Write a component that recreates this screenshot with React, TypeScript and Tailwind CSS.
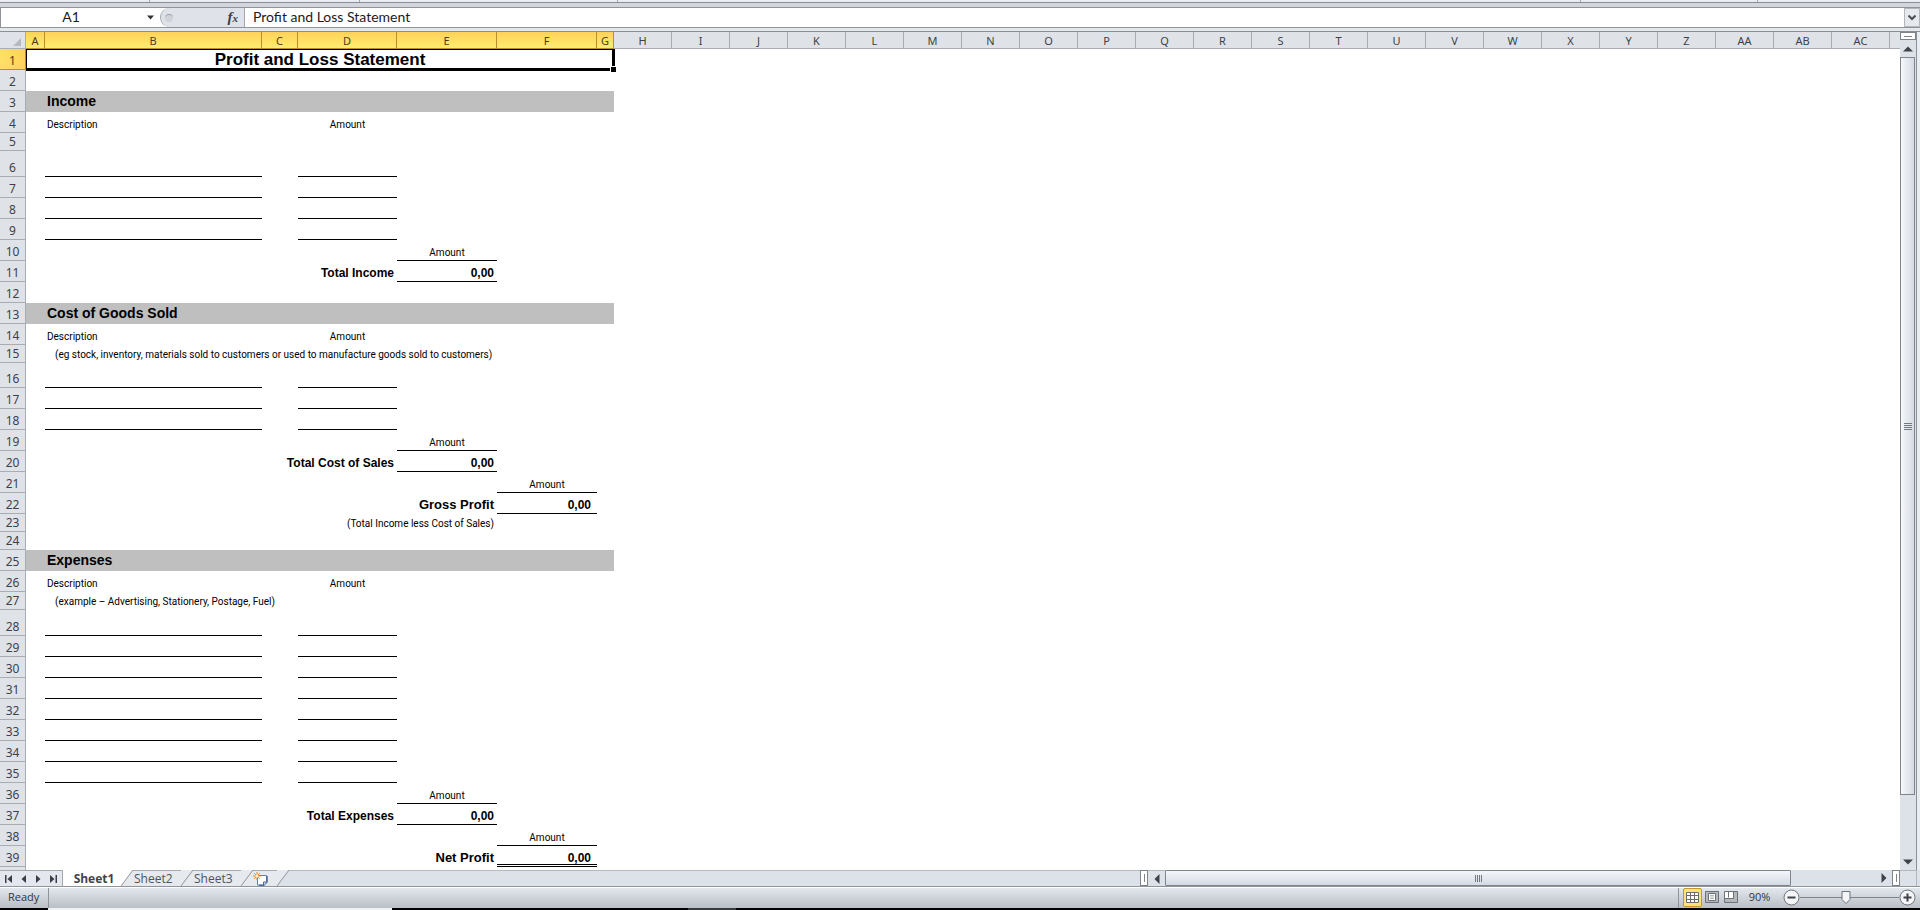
import type { ReactNode } from 'react';

type Cell = { span?: number; text?: ReactNode; className?: string };
type Row = { h: string; cells?: Cell[] };

const SMALL = "font-['Roboto',sans-serif] text-[10px] leading-4";
const AMOUNT = "font-['Roboto',sans-serif] text-[10px] leading-[14px]";
const BOLD = "font-['Liberation_Sans',sans-serif] font-bold";
const LINE = 'border-b border-black';

const letters = ['A', 'B', 'C', 'D', 'E', 'F', 'G'];
const others = ['H', 'I', 'J', 'K', 'L', 'M', 'N', 'O', 'P', 'Q', 'R', 'S', 'T', 'U', 'V', 'W', 'X', 'Y', 'Z', 'AA', 'AB', 'AC'];

const entry = (h = 'h-[21px]'): Row => ({
  h,
  cells: [{}, { className: LINE }, {}, { className: LINE }, { span: 3 }],
});
const section = (text: string): Row => ({
  h: 'h-[21px]',
  cells: [
    { className: 'bg-[#bfbfbf]' },
    { span: 6, text, className: "bg-[#bfbfbf] pb-px pl-[2px] font-['Liberation_Sans',sans-serif] text-[14px] leading-5 font-bold" },
  ],
});
const labels: Row = {
  h: 'h-[21px]',
  cells: [
    {},
    { text: 'Description', className: `pl-[2px] ${SMALL}` },
    {},
    { text: 'Amount', className: `text-center ${SMALL}` },
    { span: 3 },
  ],
};
const note = (text: string): Row => ({
  h: 'h-[18px]',
  cells: [{}, { span: 5, text, className: `pl-[10px] ${SMALL}` }, {}],
});
const amountE: Row = {
  h: 'h-[21px]',
  cells: [{ span: 4 }, { text: 'Amount', className: `text-center ${AMOUNT} ${LINE}` }, { span: 2 }],
};
const amountF: Row = {
  h: 'h-[21px]',
  cells: [{ span: 5 }, { text: 'Amount', className: `text-center ${AMOUNT} ${LINE}` }, {}],
};
const totalE = (text: string): Row => ({
  h: 'h-[21px]',
  cells: [
    {},
    { span: 3, text, className: `pb-px pr-[3px] text-right text-[12px] leading-4 ${BOLD}` },
    { text: '0,00', className: `pr-[3px] text-right text-[12px] leading-4 ${BOLD} ${LINE}` },
    { span: 2 },
  ],
});
const totalF = (text: string, border: string): Row => ({
  h: 'h-[21px]',
  cells: [
    {},
    { span: 4, text, className: `pb-px pr-[3px] text-right text-[13px] leading-4 ${BOLD}` },
    { text: '0,00', className: `pr-[6px] text-right text-[12px] ${BOLD} ${border}` },
    {},
  ],
});
const blank = (h = 'h-[21px]'): Row => ({ h, cells: [{ span: 7 }] });

const rows: Row[] = [
  {
    h: 'h-[21px]',
    cells: [
      {
        span: 7,
        className: "relative text-center font-['Liberation_Sans',sans-serif] text-[17px] leading-5 font-bold",
        text: (
          <>
            Profit and Loss Statement
            <span className="absolute top-0 right-[-1px] bottom-[-1px] left-0 border-t border-r-3 border-b-3 border-l border-black" />
            <span className="absolute right-[-3px] bottom-[-3px] h-[7px] w-[7px] border border-white bg-black" />
          </>
        ),
      },
    ],
  },
  blank(),
  section('Income'),
  labels,
  blank('h-[18px]'),
  entry('h-[26px]'),
  entry(),
  entry(),
  entry(),
  amountE,
  totalE('Total Income'),
  blank(),
  section('Cost of Goods Sold'),
  labels,
  note('(eg stock, inventory, materials sold to customers or used to manufacture goods sold to customers)'),
  entry('h-[25px]'),
  entry(),
  entry(),
  amountE,
  totalE('Total Cost of Sales'),
  amountF,
  totalF('Gross Profit', `leading-4 ${LINE}`),
  {
    h: 'h-[18px]',
    cells: [
      {},
      { span: 4, text: '(Total Income less Cost of Sales)', className: `pr-[3px] text-right ${SMALL}` },
      { span: 2 },
    ],
  },
  blank('h-[18px]'),
  section('Expenses'),
  labels,
  note('(example – Advertising, Stationery, Postage, Fuel)'),
  entry('h-[26px]'),
  entry(),
  entry(),
  entry(),
  entry(),
  entry(),
  entry(),
  entry(),
  amountE,
  totalE('Total Expenses'),
  amountF,
  totalF('Net Profit', 'leading-3 border-b-3 border-double border-black'),
];

function FormulaBar() {
  return (
    <>
      <div className="flex h-[3px] border-b border-[#8b9097] bg-[#e9ecf1]">
        <div className="w-[150px] border-r border-[#a4a9b0]" />
        <div className="w-[210px] border-r border-[#a4a9b0]" />
        <div className="w-[258px] border-r border-[#a4a9b0]" />
        <div className="flex-1" />
        <div className="w-[178px] border-x border-[#a4a9b0]" />
        <div className="w-[162px]" />
      </div>
      <div className="h-1 bg-[#d3d7dd]" />
      <div className="flex h-[21px] border-y border-[#8f949b] bg-white font-['Lato',sans-serif] text-[14px] text-[#1b1b1b]">
        <div className="flex w-[160px] items-center border-l border-[#8f949b]">
          <input aria-label="Name box" defaultValue="A1" className="h-full w-[142px] bg-transparent pr-0.5 pb-0.5 text-center outline-none" />
          <button aria-label="Name list" className="flex h-full flex-1 items-center">
            <svg width="8" height="5" viewBox="0 0 8 5" className="ml-1"><path d="M0 0.5h7L3.5 4.5z" fill="#333" /></svg>
          </button>
        </div>
        <div className="flex w-[85px] items-center justify-between rounded-l-full border-r border-l border-[#a4a9b0] bg-[#dfe2e8] pr-1.5 pl-1">
          <span className="h-2 w-2 rounded-full border-t border-[#9a9fa6] bg-[#cfd2d7]" />
          <button aria-label="Insert function" className="font-['Liberation_Serif',serif] text-[15px] leading-4 font-bold text-[#3c3f45] italic">
            f<span className="text-[11px]">x</span>
          </button>
        </div>
        <input aria-label="Formula" defaultValue="Profit and Loss Statement" className="min-w-0 flex-1 pb-0.5 pl-2 outline-none" />
        <button aria-label="Expand formula bar" className="flex w-4 items-center justify-center border border-[#b4b8be] bg-[#e6e9ed]">
          <svg width="8" height="6" viewBox="0 0 8 6"><path d="M0.5 0.5L4 4L7.5 0.5" fill="none" stroke="#4a4e55" strokeWidth="2" /></svg>
        </button>
      </div>
      <div className="h-1 border-b border-[#8b9097] bg-[#e4e7ec]" />
    </>
  );
}

function Sheet() {
  return (
    <table className="w-full table-fixed border-separate border-spacing-0 whitespace-nowrap text-black">
      <colgroup>
        <col className="w-[26px]" />
        <col className="w-[19px]" />
        <col className="w-[217px]" />
        <col className="w-[36px]" />
        <col className="w-[99px]" />
        <col className="w-[100px]" />
        <col className="w-[100px]" />
        <col className="w-[17px]" />
        {others.map((c) => <col key={c} className="w-[58px]" />)}
        <col />
      </colgroup>
      <thead className="font-['Noto_Sans',sans-serif] text-[11px] leading-[14px]">
        <tr className="h-[17px]">
          <th aria-label="Select all" className="border-r border-b border-[#a9adb3] bg-[#dfe3e9] p-0">
            <svg width="8" height="8" viewBox="0 0 8 8" className="mt-1 mr-1 ml-auto"><path d="M8 0v8H0z" fill="#b6bac0" /></svg>
          </th>
          {letters.map((c) => (
            <th key={c} className="border-r border-b border-[#b98f2c] bg-linear-to-b from-[#ffd25a] to-[#ffec6e] px-0 pt-[2px] pb-0 font-normal text-[#4a4018]">{c}</th>
          ))}
          {others.map((c) => (
            <th key={c} className="border-r border-b border-[#a9adb3] bg-[#dfe3e8] px-0 pt-[2px] pb-0 font-normal text-[#3d4148]">{c}</th>
          ))}
          <th className="border-b border-[#a9adb3] bg-[#dfe3e8] p-0" />
        </tr>
      </thead>
      <tbody>
        {rows.map((r, i) => (
          <tr key={i} className={r.h}>
            <th
              className={
                i === 0
                  ? "border-r border-b border-[#b98f2c] bg-linear-to-r from-[#ffe066] to-[#ffd25a] p-0 align-bottom font-['Noto_Sans',sans-serif] text-[12px] leading-4 font-normal text-[#4a4018]"
                  : "border-r border-b border-[#a9adb3] bg-[#dfe3e8] p-0 align-bottom font-['Noto_Sans',sans-serif] text-[12px] leading-4 font-normal text-[#3d4148]"
              }
            >
              {i + 1}
            </th>
            {r.cells?.map((c, j) => (
              <td key={j} colSpan={c.span} className={`pt-0 align-bottom ${c.className ?? ''}`}>{c.text}</td>
            ))}
            <td colSpan={23} />
          </tr>
        ))}
        <tr className="h-[3px]">
          <th className="border-r border-[#a9adb3] bg-[#dfe3e8] p-0" />
          <td colSpan={30} />
        </tr>
      </tbody>
    </table>
  );
}

function VerticalScroll() {
  return (
    <div className="flex w-5 shrink-0 bg-[#e9ecf1]">
      <div className="flex w-[17px] flex-col border-r border-[#8b9097] bg-[#dde1e8]">
        <div className="flex h-2 items-center justify-center border border-[#7f848b] bg-white"><div className="h-px w-2 bg-[#7f848b]" /></div>
        <button aria-label="Scroll up" className="flex h-[17px] items-center justify-center">
          <svg width="10" height="6" viewBox="0 0 10 6"><path d="M0 5.5L5 0.5L10 5.5z" fill="#3f4349" /></svg>
        </button>
        <div className="mr-px flex flex-[738] flex-col items-center justify-center gap-px border border-[#80858d] bg-linear-to-r from-[#f6f8fb] to-[#d5dae4]">
          <div className="h-px w-2 bg-[#747981]" />
          <div className="h-px w-2 bg-[#747981]" />
          <div className="h-px w-2 bg-[#747981]" />
          <div className="h-px w-2 bg-[#747981]" />
        </div>
        <div className="flex-[58]" />
        <button aria-label="Scroll down" className="flex h-[17px] items-center justify-center">
          <svg width="10" height="6" viewBox="0 0 10 6"><path d="M0 0.5h10L5 5.5z" fill="#3f4349" /></svg>
        </button>
      </div>
    </div>
  );
}

function Slash({ left, right }: { left: string; right: string }) {
  return (
    <svg width="12" height="16" viewBox="0 0 12 16" className="shrink-0">
      <path d="M0 0H12L0 16z" fill={left} />
      <path d="M12 0V16H0z" fill={right} />
      <path d="M0 16L12 0" stroke="#8f949b" fill="none" />
    </svg>
  );
}

function TabBar() {
  const nav = 'flex h-full flex-1 items-center justify-center';
  const tab = 'w-12 bg-[#e6e9ee] pl-px text-left text-[#4f545c] border-t border-[#a4a9b0]';
  return (
    <div className="flex h-[17px] shrink-0 bg-[#dde1e8] font-['Open_Sans',sans-serif] text-[12px] leading-[15px]">
      <div className="flex flex-[60] border-b border-[#8f949b]">
        <div className="flex w-[63px] border-t border-r border-[#a4a9b0] bg-[#e4e7ed] px-0.5 text-[#3a3e45]">
          <button aria-label="First sheet" className={nav}><svg width="8" height="8" viewBox="0 0 8 8" fill="currentColor"><path d="M0 0h1.5v8H0zM7 0v8L2.5 4z" /></svg></button>
          <button aria-label="Previous sheet" className={nav}><svg width="8" height="8" viewBox="0 0 8 8" fill="currentColor"><path d="M6 0v8L1.5 4z" /></svg></button>
          <button aria-label="Next sheet" className={nav}><svg width="8" height="8" viewBox="0 0 8 8" fill="currentColor"><path d="M2 0v8L6.5 4z" /></svg></button>
          <button aria-label="Last sheet" className={nav}><svg width="8" height="8" viewBox="0 0 8 8" fill="currentColor"><path d="M6.5 0h1.5v8H6.5zM1 0v8L5.5 4z" /></svg></button>
        </div>
        <button className="w-[58px] bg-white pl-1 text-center font-bold text-[#3f444b]">Sheet1</button>
        <Slash left="#ffffff" right="#e6e9ee" />
        <button className={tab}>Sheet2</button>
        <Slash left="#e6e9ee" right="#e6e9ee" />
        <button className={tab}>Sheet3</button>
        <Slash left="#e6e9ee" right="#e6e9ee" />
        <button aria-label="Insert worksheet" className="flex w-6 items-center border-t border-[#a4a9b0] bg-[#e6e9ee]">
          <svg width="16" height="14" viewBox="0 0 16 14">
            <path d="M4.5 3.5h9v6.5l-3 3H4.5z" fill="#fff" stroke="#5f7dad" />
            <path d="M14 4v6l-3.500 3.500H6" fill="none" stroke="#4b689a" strokeWidth="1.500" />
            <path d="M14 10H10.500v3.500" fill="#cbd8ec" stroke="#4b689a" />
            <path d="M4 0v8M0 4h8M1.2 1.2l5.600 5.600M6.800 1.200L1.200 6.800" stroke="#e08a2a" fill="none" />
            <circle cx="4" cy="4" r="1.500" fill="#fff3c4" />
          </svg>
        </button>
        <Slash left="#e6e9ee" right="#dde1e8" />
        <div className="flex-1 border-t border-[#b4b8be]" />
      </div>
      <div className="flex flex-[40] border-b border-[#8f949b]">
        <div className="flex w-2 items-center justify-center border border-[#7f848b] bg-white"><div className="h-2 w-px bg-[#7f848b]" /></div>
        <button aria-label="Scroll left" className="flex w-[17px] items-center justify-center border-t border-[#b4b8be]">
          <svg width="6" height="10" viewBox="0 0 6 10"><path d="M5.5 0v10L0.5 5z" fill="#3f4349" /></svg>
        </button>
        <div className="flex flex-[626] items-center justify-center gap-px rounded-[1px] border border-[#80858d] bg-linear-to-b from-[#f3f6f9] to-[#d5dae4]">
          <div className="h-[7px] w-px bg-[#747981]" />
          <div className="h-[7px] w-px bg-[#747981]" />
          <div className="h-[7px] w-px bg-[#747981]" />
          <div className="h-[7px] w-px bg-[#747981]" />
        </div>
        <div className="flex-[84]" />
        <button aria-label="Scroll right" className="flex w-[17px] items-center justify-center">
          <svg width="6" height="10" viewBox="0 0 6 10"><path d="M0.5 0v10L5.5 5z" fill="#3f4349" /></svg>
        </button>
        <div className="flex w-2 items-center justify-center border border-[#7f848b] bg-white"><div className="h-2 w-px bg-[#7f848b]" /></div>
      </div>
      <div className="flex w-5 border-b border-[#8f949b]">
        <div className="w-[17px] border-t border-r border-[#b4b8be]" />
      </div>
    </div>
  );
}

function StatusBar() {
  return (
    <div className="flex h-[21px] shrink-0 items-center border-t border-white bg-linear-to-b from-[#e3e7ee] to-[#babfc5] font-['Open_Sans',sans-serif] text-[11px] text-[#33373d]">
      <div className="flex h-full w-[49px] items-center border-r border-[#8f949b] pb-0.5 pl-2">Ready</div>
      <div className="flex-1" />
      <div className="flex h-full items-center border-l border-[#8f949b] pb-0.5 pl-1">
        <button aria-label="Normal view" className="flex h-[19px] w-[19px] items-center justify-center rounded-[2px] border border-[#c8962e] bg-[#ffe27a]">
          <svg width="13" height="11" viewBox="0 0 13 11" fill="#fff" stroke="#6b6b6b"><path d="M0.5 0.5h12v10h-12zM0.5 3.5h12M0.5 7.5h12M4.5 0.5v10M8.5 0.5v10" /></svg>
        </button>
        <button aria-label="Page layout view" className="flex w-[19px] justify-center">
          <svg width="14" height="12" viewBox="0 0 14 12"><path d="M0.5 0.5h13v11H0.5z" fill="#b4b8bd" stroke="#6d7178" /><path d="M3.5 2.5h7v7h-7z" fill="#fff" stroke="#6d7178" /><path d="M5 4.5h4M5 6h4M5 7.5h4" stroke="#9a9ea4" strokeWidth="0.7" /></svg>
        </button>
        <button aria-label="Page break preview" className="flex w-[19px] justify-center">
          <svg width="14" height="12" viewBox="0 0 14 12"><path d="M0.5 0.5h13v11H0.5z" fill="#b4b8bd" stroke="#6d7178" /><path d="M1 1h8v6H1z" fill="#fff" /><path d="M4.5 0.5v6M9.5 0.5v7H0.5" fill="none" stroke="#6d7178" /></svg>
        </button>
        <button className="w-[43px] pr-1 text-center">90%</button>
      </div>
      <button aria-label="Zoom out" className="shrink-0 pb-0.5">
        <svg width="17" height="17" viewBox="0 0 17 17"><circle cx="8.5" cy="8.5" r="7.5" fill="#f4f5f7" stroke="#6d7178" /><path d="M4.5 8.5h8" stroke="#3f4349" strokeWidth="2" /></svg>
      </button>
      <div className="relative flex h-full w-[99px] items-center pb-0.5">
        <div className="h-px w-full bg-[#80858d]" />
        <input
          type="range"
          aria-label="Zoom"
          defaultValue={45}
          className="absolute inset-0 h-full w-full appearance-none bg-transparent opacity-0"
        />
        <svg width="10" height="13" viewBox="0 0 10 13" className="pointer-events-none absolute left-[41%]"><path d="M1 0.5h8v8L5 12.5L1 8.5z" fill="#f4f5f7" stroke="#6d7178" /></svg>
      </div>
      <button aria-label="Zoom in" className="mr-1 shrink-0 pb-0.5">
        <svg width="17" height="17" viewBox="0 0 17 17"><circle cx="8.5" cy="8.5" r="7.5" fill="#f4f5f7" stroke="#6d7178" /><path d="M4.5 8.5h8M8.5 4.5v8" stroke="#3f4349" strokeWidth="2" /></svg>
      </button>
    </div>
  );
}

export default function App() {
  return (
    <div className="flex h-screen flex-col overflow-hidden bg-white">
      <FormulaBar />
      <div className="flex min-h-0 flex-1">
        <div className="min-w-0 flex-1 overflow-hidden">
          <Sheet />
        </div>
        <VerticalScroll />
      </div>
      <TabBar />
      <StatusBar />
      <div className="flex h-0.5 shrink-0 bg-black">
        <div className="w-12" />
        <div className="w-[344px] bg-[#f0f0f0]" />
        <div className="w-[296px]" />
        <div className="w-12 bg-[#3a3a3a]" />
      </div>
    </div>
  );
}
